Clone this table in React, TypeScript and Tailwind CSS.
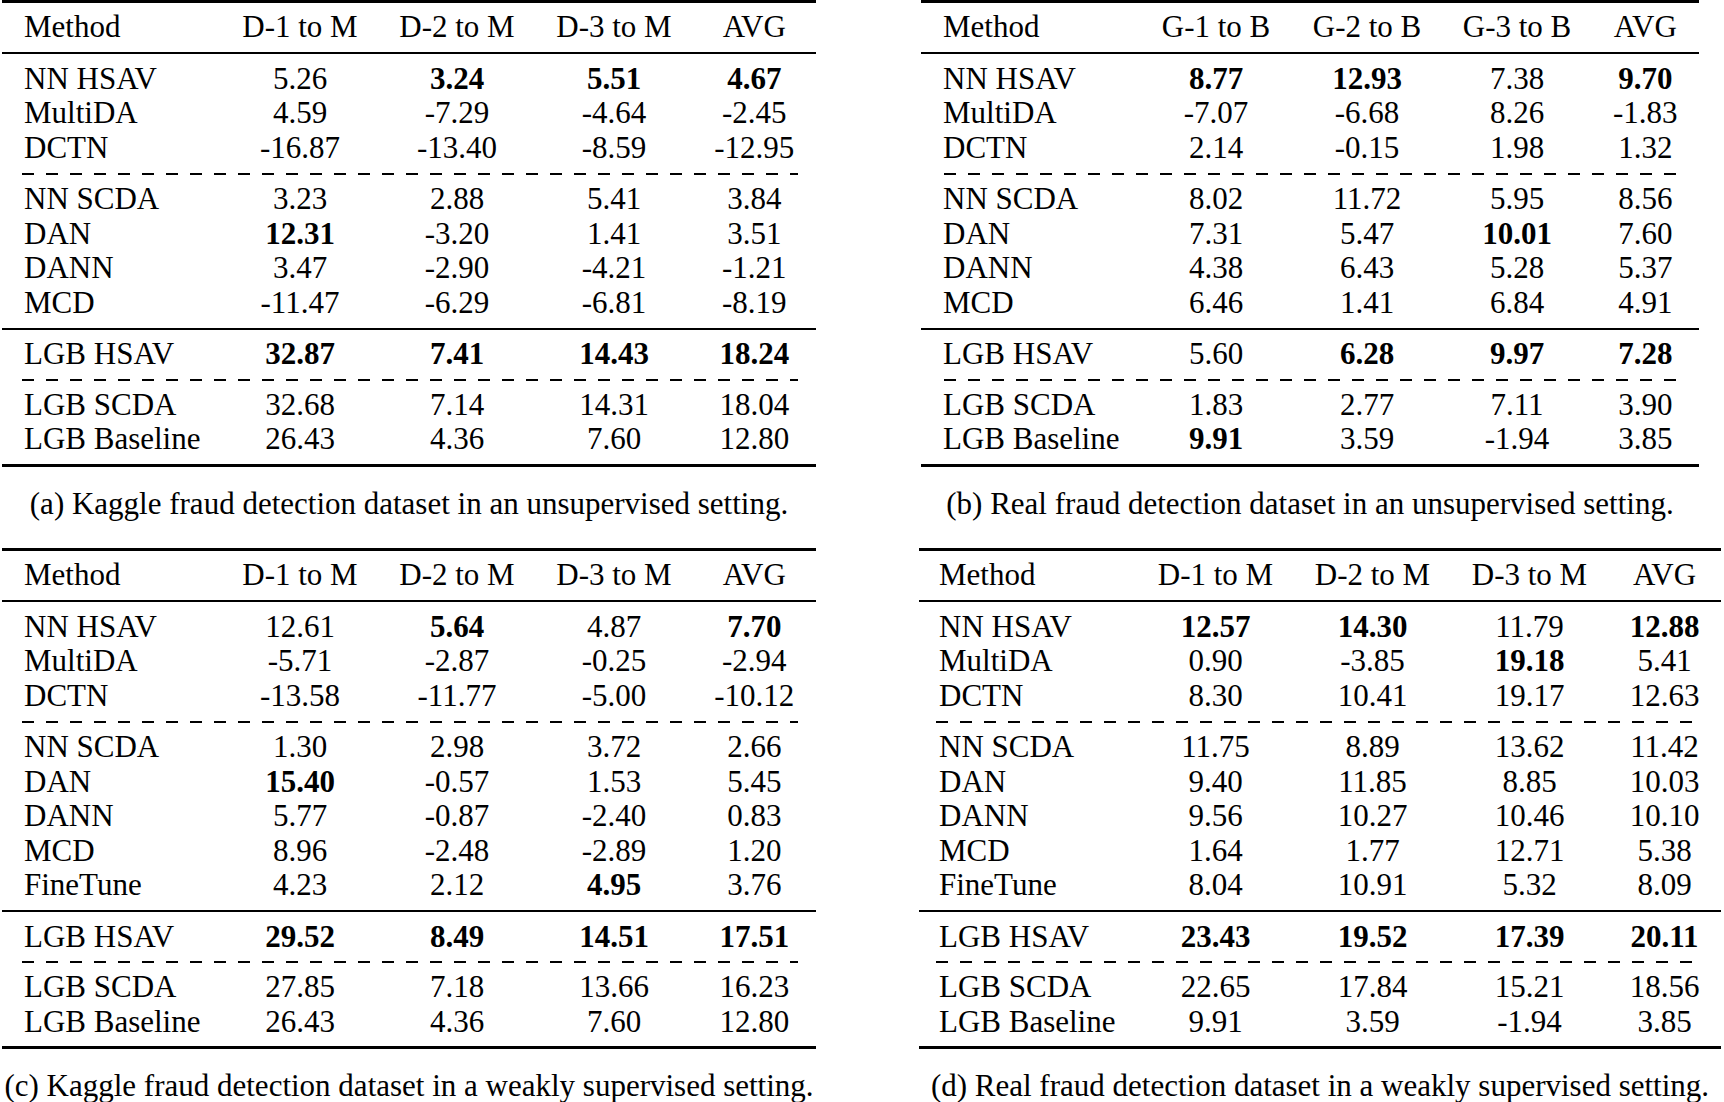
import React from 'react';

type Row = string[];

interface TableSpec {
  caption: string;
  header: string[];
  groups: { rows: Row[]; sep: 'dash' | 'solid' }[];
  width: string;
  cols: string;
  pad: string;
  dash: string;
}

// a leading "*" marks a bold value
const tables: TableSpec[] = [
  {
    caption: '(a) Kaggle fraud detection dataset in an unsupervised setting.',
    header: ['Method', 'D-1 to M', 'D-2 to M', 'D-3 to M', 'AVG'],
    width: 'w-[814px]',
    cols: 'grid-cols-[219.5px_157px_157px_157px_123.5px]',
    pad: 'pl-[22px]',
    dash: 'ml-[20px] mr-[18px]',
    groups: [
      {
        sep: 'dash',
        rows: [
          ['NN HSAV', '5.26', '*3.24', '*5.51', '*4.67'],
          ['MultiDA', '4.59', '-7.29', '-4.64', '-2.45'],
          ['DCTN', '-16.87', '-13.40', '-8.59', '-12.95'],
        ],
      },
      {
        sep: 'solid',
        rows: [
          ['NN SCDA', '3.23', '2.88', '5.41', '3.84'],
          ['DAN', '*12.31', '-3.20', '1.41', '3.51'],
          ['DANN', '3.47', '-2.90', '-4.21', '-1.21'],
          ['MCD', '-11.47', '-6.29', '-6.81', '-8.19'],
        ],
      },
      {
        sep: 'dash',
        rows: [['LGB HSAV', '*32.87', '*7.41', '*14.43', '*18.24']],
      },
      {
        sep: 'dash',
        rows: [
          ['LGB SCDA', '32.68', '7.14', '14.31', '18.04'],
          ['LGB Baseline', '26.43', '4.36', '7.60', '12.80'],
        ],
      },
    ],
  },
  {
    caption: '(b) Real fraud detection dataset in an unsupervised setting.',
    header: ['Method', 'G-1 to B', 'G-2 to B', 'G-3 to B', 'AVG'],
    width: 'w-[778px]',
    cols: 'grid-cols-[219.5px_151px_151px_149px_107.5px]',
    pad: 'pl-[22px]',
    dash: 'ml-[23px] mr-[18px]',
    groups: [
      {
        sep: 'dash',
        rows: [
          ['NN HSAV', '*8.77', '*12.93', '7.38', '*9.70'],
          ['MultiDA', '-7.07', '-6.68', '8.26', '-1.83'],
          ['DCTN', '2.14', '-0.15', '1.98', '1.32'],
        ],
      },
      {
        sep: 'solid',
        rows: [
          ['NN SCDA', '8.02', '11.72', '5.95', '8.56'],
          ['DAN', '7.31', '5.47', '*10.01', '7.60'],
          ['DANN', '4.38', '6.43', '5.28', '5.37'],
          ['MCD', '6.46', '1.41', '6.84', '4.91'],
        ],
      },
      {
        sep: 'dash',
        rows: [['LGB HSAV', '5.60', '*6.28', '*9.97', '*7.28']],
      },
      {
        sep: 'dash',
        rows: [
          ['LGB SCDA', '1.83', '2.77', '7.11', '3.90'],
          ['LGB Baseline', '*9.91', '3.59', '-1.94', '3.85'],
        ],
      },
    ],
  },
  {
    caption: '(c) Kaggle fraud detection dataset in a weakly supervised setting.',
    header: ['Method', 'D-1 to M', 'D-2 to M', 'D-3 to M', 'AVG'],
    width: 'w-[814px]',
    cols: 'grid-cols-[219.5px_157px_157px_157px_123.5px]',
    pad: 'pl-[22px]',
    dash: 'ml-[20px] mr-[18px]',
    groups: [
      {
        sep: 'dash',
        rows: [
          ['NN HSAV', '12.61', '*5.64', '4.87', '*7.70'],
          ['MultiDA', '-5.71', '-2.87', '-0.25', '-2.94'],
          ['DCTN', '-13.58', '-11.77', '-5.00', '-10.12'],
        ],
      },
      {
        sep: 'solid',
        rows: [
          ['NN SCDA', '1.30', '2.98', '3.72', '2.66'],
          ['DAN', '*15.40', '-0.57', '1.53', '5.45'],
          ['DANN', '5.77', '-0.87', '-2.40', '0.83'],
          ['MCD', '8.96', '-2.48', '-2.89', '1.20'],
          ['FineTune', '4.23', '2.12', '*4.95', '3.76'],
        ],
      },
      {
        sep: 'dash',
        rows: [['LGB HSAV', '*29.52', '*8.49', '*14.51', '*17.51']],
      },
      {
        sep: 'dash',
        rows: [
          ['LGB SCDA', '27.85', '7.18', '13.66', '16.23'],
          ['LGB Baseline', '26.43', '4.36', '7.60', '12.80'],
        ],
      },
    ],
  },
  {
    caption: '(d) Real fraud detection dataset in a weakly supervised setting.',
    header: ['Method', 'D-1 to M', 'D-2 to M', 'D-3 to M', 'AVG'],
    width: 'w-[802px]',
    cols: 'grid-cols-[218px_157px_157px_157px_113px]',
    pad: 'pl-[20px]',
    dash: 'ml-[17px] mr-[18px]',
    groups: [
      {
        sep: 'dash',
        rows: [
          ['NN HSAV', '*12.57', '*14.30', '11.79', '*12.88'],
          ['MultiDA', '0.90', '-3.85', '*19.18', '5.41'],
          ['DCTN', '8.30', '10.41', '19.17', '12.63'],
        ],
      },
      {
        sep: 'solid',
        rows: [
          ['NN SCDA', '11.75', '8.89', '13.62', '11.42'],
          ['DAN', '9.40', '11.85', '8.85', '10.03'],
          ['DANN', '9.56', '10.27', '10.46', '10.10'],
          ['MCD', '1.64', '1.77', '12.71', '5.38'],
          ['FineTune', '8.04', '10.91', '5.32', '8.09'],
        ],
      },
      {
        sep: 'dash',
        rows: [['LGB HSAV', '*23.43', '*19.52', '*17.39', '*20.11']],
      },
      {
        sep: 'dash',
        rows: [
          ['LGB SCDA', '22.65', '17.84', '15.21', '18.56'],
          ['LGB Baseline', '9.91', '3.59', '-1.94', '3.85'],
        ],
      },
    ],
  },
];

const TableRow: React.FC<{ cells: string[]; spec: TableSpec }> = ({ cells, spec }) => (
  <div className={`grid ${spec.cols} h-[34.5px] leading-[34.5px]`}>
    {cells.map((c, i) => {
      const bold = c.startsWith('*');
      const text = bold ? c.slice(1) : c;
      return (
        <div
          key={i}
          className={`whitespace-nowrap ${i === 0 ? `text-left ${spec.pad}` : 'text-center'} ${
            bold ? 'font-bold' : ''
          }`}
        >
          {text}
        </div>
      );
    })}
  </div>
);

const Separator: React.FC<{ kind: 'dash' | 'solid'; spec: TableSpec; short?: boolean }> = ({
  kind,
  spec,
  short,
}) => (
  <div className={`flex flex-col justify-center ${short ? 'h-[16px]' : 'h-[17px]'}`}>
    {kind === 'solid' ? (
      <div className="h-[2px] bg-black" />
    ) : (
      <div
        className={`h-[2px] ${spec.dash} bg-[repeating-linear-gradient(to_right,#000_0px,#000_12px,transparent_12px,transparent_24px)]`}
      />
    )}
  </div>
);

const ResultTable: React.FC<{ spec: TableSpec }> = ({ spec }) => (
  <div className="flex flex-col">
    <div className={`${spec.width} border-t-[3px] border-b-[3px] border-black pt-[7px] pb-[7px]`}>
      <TableRow cells={spec.header} spec={spec} />
      <Separator kind="solid" spec={spec} />
      {spec.groups.map((g, gi) => (
        <React.Fragment key={gi}>
          {g.rows.map((r, ri) => (
            <TableRow key={ri} cells={r} spec={spec} />
          ))}
          {gi < spec.groups.length - 1 && (
            <Separator kind={g.sep} spec={spec} short={gi === spec.groups.length - 2} />
          )}
        </React.Fragment>
      ))}
    </div>
    <div className={`${spec.width} mt-[20px] flex justify-center whitespace-nowrap leading-[34.5px]`}>
      <span>{spec.caption}</span>
    </div>
  </div>
);

export default function App() {
  return (
    <div className="w-[1724px] h-[1102px] overflow-hidden bg-white text-black font-['Liberation_Serif','Times_New_Roman',serif] text-[31px]">
      <div className="grid grid-cols-[919px_805px] gap-y-[27px]">
        <div className="pl-[2px]">
          <ResultTable spec={tables[0]} />
        </div>
        <div className="pl-[2px]">
          <ResultTable spec={tables[1]} />
        </div>
        <div className="pl-[2px]">
          <ResultTable spec={tables[2]} />
        </div>
        <div>
          <ResultTable spec={tables[3]} />
        </div>
      </div>
    </div>
  );
}
